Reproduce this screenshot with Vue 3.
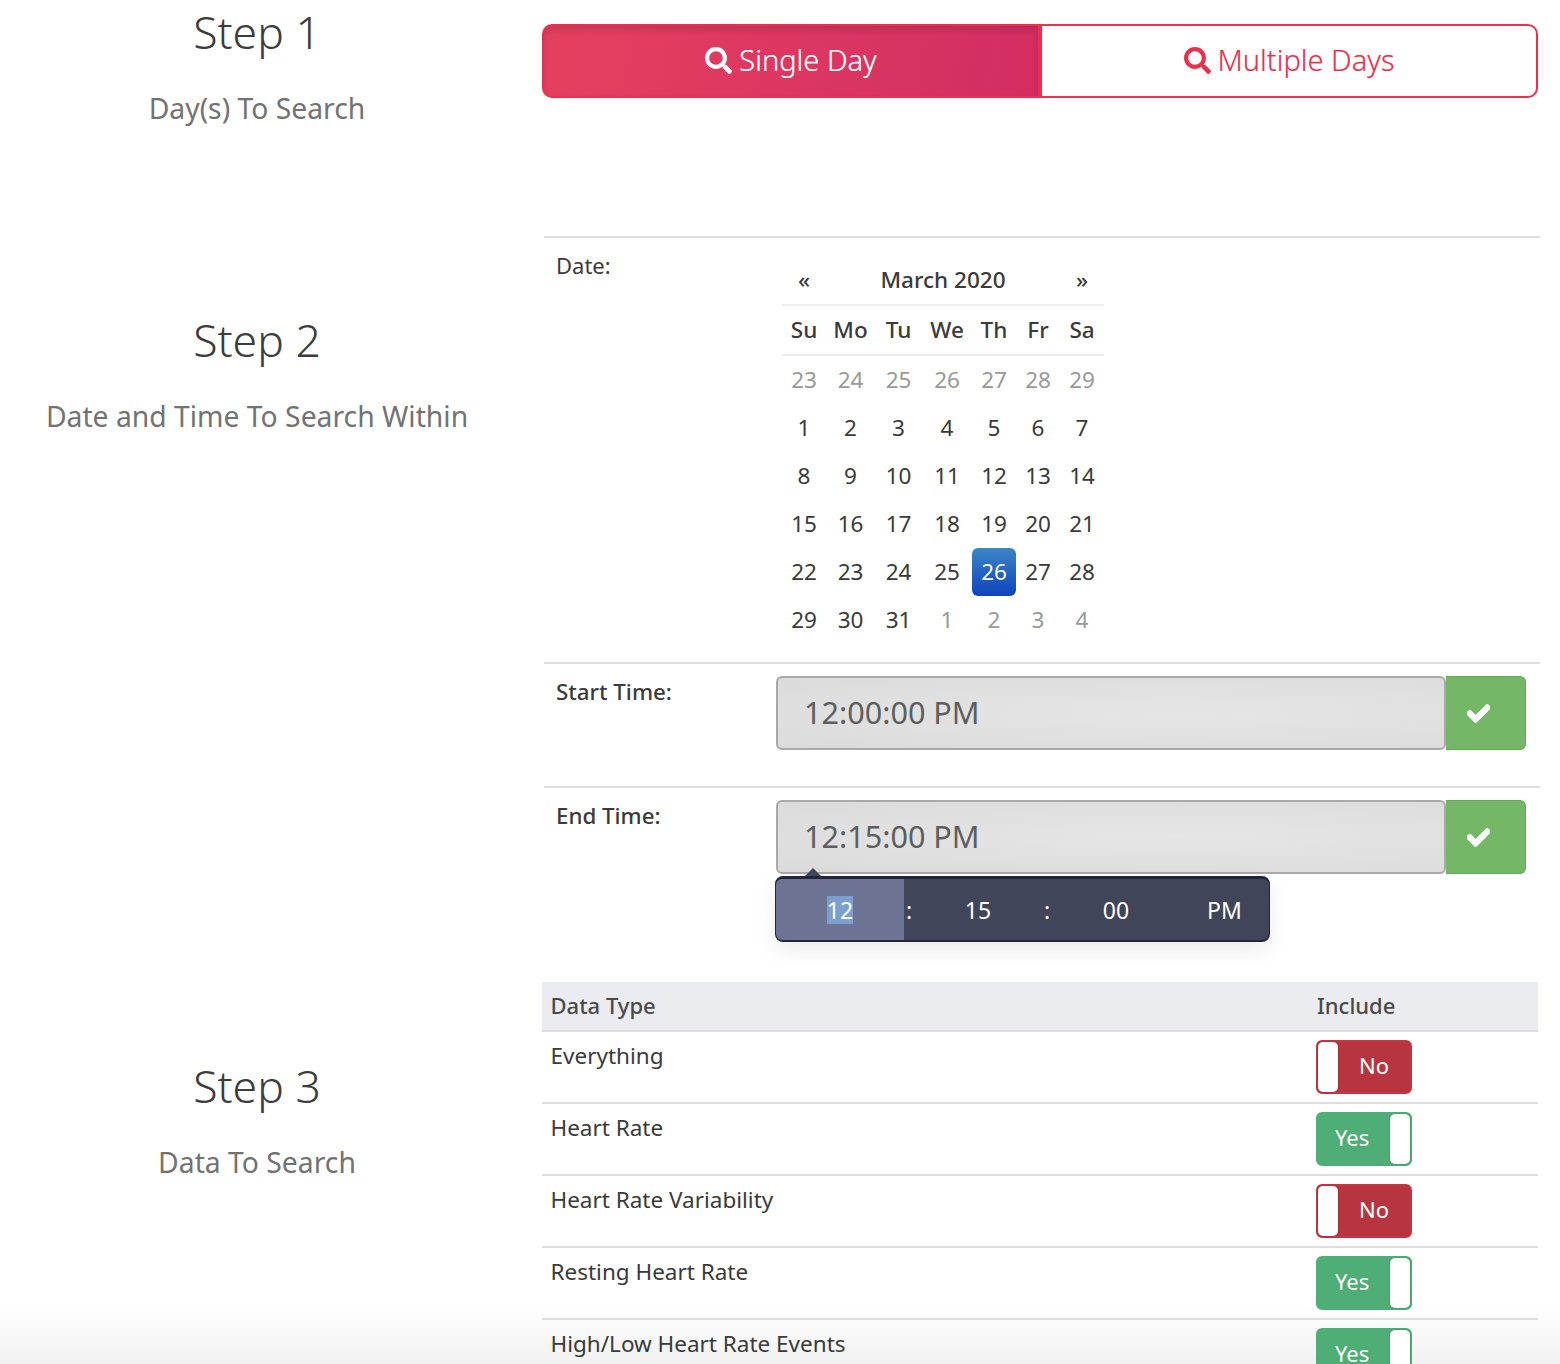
<template>
  <div class="page">
    <div class="fade"></div>

    <div class="steps">
      <div v-for="s in steps" :key="s.title" class="step" :class="s.cls">
        <h2>{{ s.title }}</h2>
        <p>{{ s.sub }}</p>
      </div>
    </div>

    <div class="main">
      <div class="btn-group">
        <button class="seg active">
          <svg class="search" viewBox="0 0 512 512"><path :d="searchPath" /></svg>
          <span class="seg-text">Single Day</span>
        </button>
        <button class="seg">
          <svg class="search" viewBox="0 0 512 512"><path :d="searchPath" /></svg>
          <span class="seg-text">Multiple Days</span>
        </button>
      </div>

      <div class="form-row date-row">
        <label>Date:</label>
        <table class="cal">
          <colgroup>
            <col v-for="w in colWidths" :key="w.id" :style="{ width: w.px + 'px' }" />
          </colgroup>
          <thead>
            <tr class="cal-head">
              <th>«</th>
              <th colspan="5" class="month">March 2020</th>
              <th>»</th>
            </tr>
            <tr class="cal-dow">
              <th v-for="d in dow" :key="d">{{ d }}</th>
            </tr>
          </thead>
          <tbody>
            <tr v-for="(week, i) in weeks" :key="i">
              <td
                v-for="c in week"
                :key="c.key"
                :class="{ old: c.old, picked: c.picked }"
              >{{ c.n }}</td>
            </tr>
          </tbody>
        </table>
      </div>

      <div class="form-row time-row">
        <label class="strong">Start Time:</label>
        <div class="time-input">
          <div class="field">12:00:00 PM</div>
          <div class="confirm">
            <svg class="check" viewBox="0 0 512 512"><path :d="checkPath" /></svg>
          </div>
        </div>
      </div>

      <div class="form-row time-row end">
        <label class="strong">End Time:</label>
        <div class="time-input">
          <div class="field">12:15:00 PM</div>
          <div class="confirm">
            <svg class="check" viewBox="0 0 512 512"><path :d="checkPath" /></svg>
          </div>
          <div class="picker">
            <span class="arrow"></span>
            <div class="pk-cell hour"><span class="sel">12</span></div>
            <div class="pk-sep">:</div>
            <div class="pk-cell">15</div>
            <div class="pk-sep">:</div>
            <div class="pk-cell">00</div>
            <div class="pk-cell">PM</div>
          </div>
        </div>
      </div>

      <div class="data-table">
        <div class="dt-row dt-head">
          <div>Data Type</div>
          <div class="inc">Include</div>
        </div>
        <div v-for="r in dataTypes" :key="r.name" class="dt-row">
          <div>{{ r.name }}</div>
          <div class="toggle" :class="r.on ? 'yes' : 'no'">
            <span class="knob"></span>
            <span class="tg-label">{{ r.on ? 'Yes' : 'No' }}</span>
          </div>
        </div>
      </div>
    </div>
  </div>
</template>

<script setup>
const searchPath = 'M505 442.7L405.3 343c-4.5-4.5-10.6-7-17-7H372c27.6-35.3 44-79.7 44-128C416 93.1 322.9 0 208 0S0 93.1 0 208s93.1 208 208 208c48.3 0 92.7-16.4 128-44v16.3c0 6.4 2.5 12.5 7 17l99.7 99.7c9.4 9.4 24.6 9.4 33.9 0l28.3-28.3c9.4-9.4 9.4-24.6.1-34zM208 336c-70.7 0-128-57.2-128-128 0-70.7 57.2-128 128-128 70.7 0 128 57.2 128 128 0 70.7-57.2 128-128 128z'
const checkPath = 'M173.898 439.404l-166.4-166.4c-9.997-9.997-9.997-26.206 0-36.204l36.203-36.204c9.997-9.998 26.207-9.998 36.204 0L192 312.69 432.095 72.596c9.997-9.997 26.207-9.997 36.204 0l36.203 36.204c9.997 9.997 9.997 26.206 0 36.204l-294.4 294.401c-9.998 9.997-26.207 9.997-36.204-.001z'

const steps = [
  { title: 'Step 1', sub: 'Day(s) To Search', cls: 's1' },
  { title: 'Step 2', sub: 'Date and Time To Search Within', cls: 's2' },
  { title: 'Step 3', sub: 'Data To Search', cls: 's3' }
]

const colWidths = [44, 49, 47, 50, 44, 44, 44].map((px, id) => ({ id, px }))
const dow = ['Su', 'Mo', 'Tu', 'We', 'Th', 'Fr', 'Sa']

// 23 Feb .. 4 Apr 2020, six rows of seven
const days = []
for (let n = 23; n <= 29; n++) days.push({ n, old: true })
for (let n = 1; n <= 31; n++) days.push({ n, old: false, picked: n === 26 })
for (let n = 1; n <= 4; n++) days.push({ n, old: true })
const weeks = []
for (let i = 0; i < 6; i++) {
  weeks.push(days.slice(i * 7, i * 7 + 7).map((d, j) => ({ ...d, key: i + '-' + j })))
}

const dataTypes = [
  { name: 'Everything', on: false },
  { name: 'Heart Rate', on: true },
  { name: 'Heart Rate Variability', on: false },
  { name: 'Resting Heart Rate', on: true },
  { name: 'High/Low Heart Rate Events', on: true }
]
</script>

<style>
html, body { margin: 0; height: 1364px; overflow: hidden; background: #fff; }
</style>

<style scoped>
.page {
  position: relative;
  height: 1364px;
  overflow: hidden;
  display: flex;
  font-family: "Noto Sans", "Open Sans", sans-serif;
  color: #333;
}
.steps {
  position: relative;
  width: 514px;
  margin-right: 28px;
  flex: none;
  text-align: center;
}
.step h2 {
  margin: 0;
  font-size: 44.5px;
  line-height: 50px;
  font-weight: 300;
  color: #3c3c3c;
}
.step p {
  margin: 25px 0 0;
  font-size: 28.3px;
  line-height: 52px;
  font-weight: 400;
  color: #727272;
}
.s1 { padding-top: 7px; height: 308px; box-sizing: border-box; }
.s2 { padding-top: 7px; height: 746px; box-sizing: border-box; }
.s3 { padding-top: 7px; }

.main { position: relative; width: 998px; flex: none; padding-top: 24px; }

.btn-group { display: flex; width: 996px; height: 74px; }
.seg {
  flex: none;
  display: flex;
  align-items: center;
  justify-content: center;
  gap: 7px;
  box-sizing: border-box;
  padding: 0 0 1px;
  height: 74px;
  width: 496px;
  font: inherit;
  font-size: 29px;
  color: #ea304f;
  background: #fff;
  border: 2px solid #ea304f;
  border-left: 0;
  border-radius: 0 10px 10px 0;
}
.seg-text { position: relative; top: -1px; font-weight: 300; -webkit-text-stroke: 0.2px currentColor; }
.seg.active {
  width: 500px;
  color: #fff;
  border-left: 2px solid #ea304f;
  border-right-width: 4px;
  border-radius: 10px 0 0 10px;
  background: linear-gradient(100deg, #e64060, #d32d63);
  box-shadow: inset 0 4px 6px rgba(60, 20, 40, 0.18);
}
.search { width: 27px; height: 27px; fill: currentColor; }

.form-row {
  display: flex;
  margin-left: 2px;
  width: 996px;
  border-top: 2px solid #dedede;
  box-sizing: border-box;
  font-size: 22px;
  color: #3a3a3a;
}
.form-row label { width: 220px; padding-left: 12px; flex: none; line-height: 30px; }
.form-row label.strong { font-weight: 500; font-size: 22.3px; line-height: 32px; }

.date-row { margin-top: 138px; height: 426px; padding-top: 12px; }
.cal {
  margin-left: 6px;
  border-collapse: separate;
  border-spacing: 0;
  table-layout: fixed;
  width: 322px;
  height: 0;
  text-align: center;
  font-size: 22.5px;
  align-self: flex-start;
}
.cal th { font-weight: 500; padding: 0; }
.cal-head th { height: 56px; vertical-align: middle; padding-top: 4px; box-sizing: border-box; border-bottom: 2px solid #eee; }
.cal .cal-dow th { height: 50px; padding-bottom: 2px; border-bottom: 2px solid #eee; box-sizing: border-box; }
.cal td { height: 48px; padding: 0 0 2px; box-sizing: border-box; }
.cal td.old { color: #999; }
.cal td.picked {
  color: #fff;
  border-radius: 6px;
  background: linear-gradient(180deg, #3a86c6, #1142bd);
}

.time-row { height: 124px; padding-top: 12px; }
.time-row.end { height: 196px; }
.time-input { position: relative; display: flex; height: 74px; }
.field {
  box-sizing: border-box;
  width: 670px;
  height: 74px;
  padding-left: 26px;
  font-size: 30.6px;
  line-height: 68px;
  color: #5e5e5e;
  border: 2px solid #a9a9a9;
  border-radius: 6px;
  background: radial-gradient(ellipse at 60% 50%, #e6e6e6, #dbdbdb);
}
.confirm {
  box-sizing: border-box;
  width: 80px;
  height: 74px;
  display: flex;
  align-items: center;
  justify-content: flex-start;
  padding-left: 21px;
  background: #74b767;
  border: 1px solid #64a857;
  border-left: 0;
  border-radius: 0 6px 6px 0;
}
.check { width: 23px; height: 23px; fill: #fff; stroke: #fff; stroke-width: 36; }

.picker {
  position: absolute;
  left: -1px;
  top: 76px;
  width: 495px;
  height: 66px;
  box-sizing: border-box;
  display: grid;
  grid-template-columns: 128px 10px 128px 10px 128px 89px;
  align-items: stretch;
  background: #414559;
  border: 1px solid #23263a;
  border-top-width: 3px;
  border-bottom-width: 2px;
  border-radius: 8px;
  box-shadow: 0 8px 22px rgba(0, 0, 0, 0.08);
  color: #fff;
  font-size: 23px;
}
.arrow {
  position: absolute;
  left: 29px;
  top: -11px;
  width: 0;
  height: 0;
  border-left: 8px solid transparent;
  border-right: 8px solid transparent;
  border-bottom: 8px solid #414559;
}
.pk-cell, .pk-sep { display: flex; align-items: center; justify-content: center; }
.pk-cell.hour { background: #6c7393; border-radius: 6px 0 0 6px; }
.sel { background: #7b9fcf; line-height: 28px; }

.data-table { width: 996px; font-size: 22.5px; color: #3a3a3a; }
.dt-row {
  display: flex;
  box-sizing: border-box;
  height: 72px;
  padding-left: 9px;
  padding-top: 8px;
  border-bottom: 2px solid #dedede;
}
.dt-row > div:first-child { width: 765px; flex: none; line-height: 32px; text-indent: -0.5px; }
.dt-head {
  height: 50px;
  background: #ebecf0;
  font-size: 22px;
  font-weight: 500;
  color: #4a4a4a;
}
.dt-row.dt-head > div:first-child { line-height: 30px; }
.inc { padding-left: 1px; line-height: 30px; }
.toggle {
  box-sizing: border-box;
  position: relative;
  width: 96px;
  height: 54px;
  border-radius: 6px;
  border: 2px solid;
  color: #fff;
  font-size: 22px;
  line-height: 46px;
}
.toggle.no { background: #b8343e; border-color: #c33545; }
.toggle.yes { background: #4fae75; border-color: #4fae75; }
.knob {
  position: absolute;
  top: 0;
  width: 20px;
  height: 50px;
  background: #fff;
  border-radius: 5px;
  box-shadow: 0 0 2px rgba(0, 0, 0, 0.25);
}
.toggle.no .knob { left: 0; }
.toggle.yes .knob { right: 0; }
.tg-label { position: absolute; top: 0; }
.toggle.no .tg-label { left: 41px; }
.toggle.yes .tg-label { left: 17px; }

/* soft grey at the bottom edge, behind the rows */
.fade {
  position: absolute;
  left: 0;
  right: 0;
  bottom: 0;
  height: 60px;
  background: linear-gradient(180deg, rgba(240, 240, 240, 0), rgba(240, 240, 240, 0.9));
  pointer-events: none;
}
</style>
